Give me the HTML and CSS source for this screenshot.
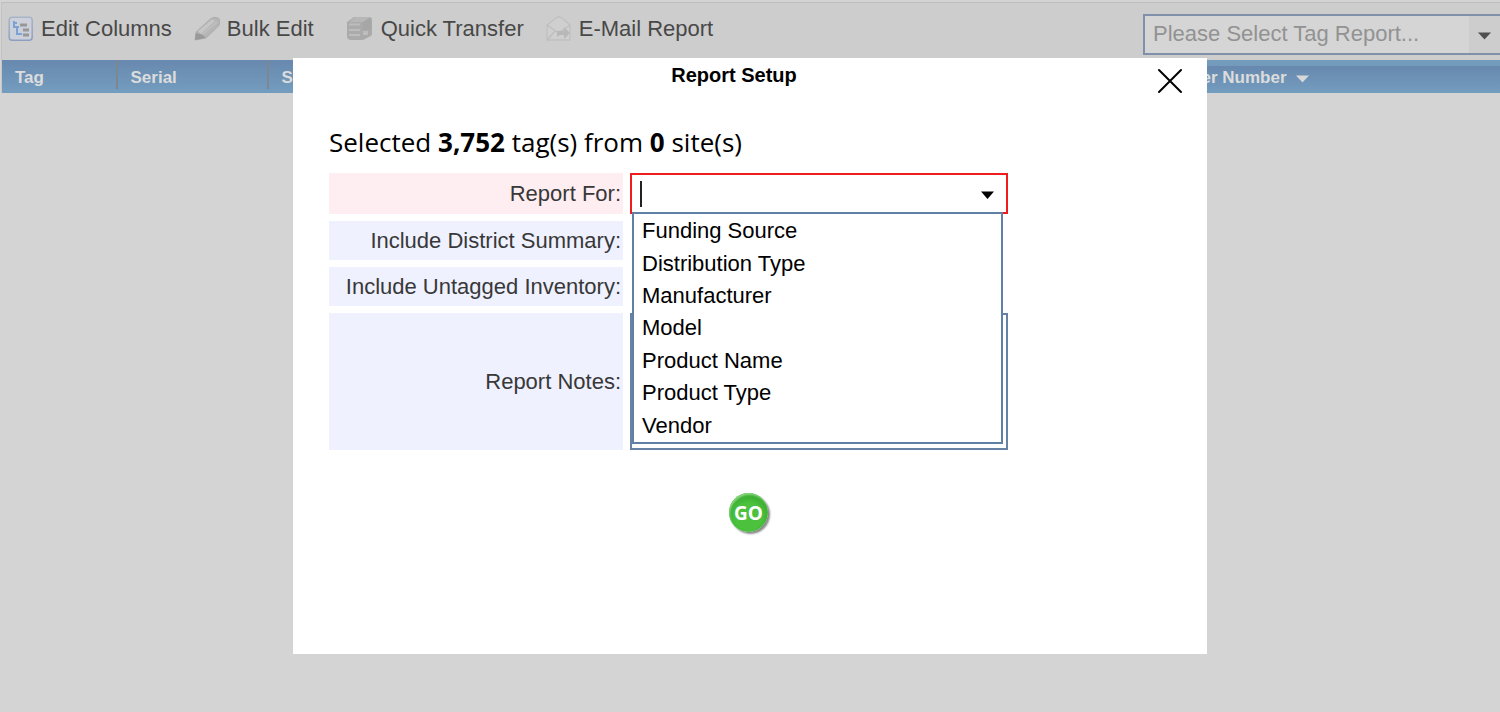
FILE: index.html
```html
<!DOCTYPE html>
<html lang="en">
<head>
<meta charset="utf-8">
<title>Report Setup</title>
<link rel="stylesheet" href="styles.css">
</head>
<body>
<main class="page">
  <div class="toolbar">
    <nav class="tools">
      <button class="tool tool-columns" type="button">
        <svg class="icon" viewBox="0 0 26 26" aria-hidden="true">
          <defs><linearGradient id="tile" x1="0" y1="0" x2="0" y2="1"><stop offset="0" stop-color="#a9b4c8"/><stop offset="1" stop-color="#8f9dc0"/></linearGradient></defs>
          <rect x="1.2" y="1.2" width="23" height="23" rx="3" fill="#cbd0da" stroke="url(#tile)" stroke-width="1.5"/>
          <path d="M5 7h4M6 5v6h5M9 11v7h5" fill="none" stroke="#7ba2d2" stroke-width="2"/>
          <path d="M12 9h7M15 14h6M15 19h6" stroke="#979797" stroke-width="3"/>
        </svg>Edit Columns</button>
      <button class="tool tool-bulk" type="button">
        <svg class="icon" viewBox="0 0 26 26" aria-hidden="true">
          <path d="M1 24l1-8L17 2.500q4-2.500 8 0 2 3 0 7L12 22z" fill="#b5b5b5" stroke="#adadad"/>
          <path d="M4 15L18 3.500l3 1.500L7 18z" fill="#c6c6c6"/>
          <path d="M9 18L23 6" stroke="#bebebe" stroke-width="2"/>
          <path d="M1 24l1-7 4 1 4 2 1 2z" fill="#999"/>
        </svg>Bulk Edit</button>
      <button class="tool tool-transfer" type="button">
        <svg class="icon" viewBox="0 0 26 26" aria-hidden="true">
          <path d="M8 1h15q3 0 3 3v14q0 2-3 3l-6 3H5q-4 0-4-4V6z" fill="#aaa"/>
          <path d="M9 1h15l-7 5H3z" fill="#b7b7b7"/>
          <rect x="1.500" y="6" width="14" height="16" rx="2" fill="#ababab"/>
          <path d="M3 8.500h11M3 14h11M3 19h11" stroke="#bdbdbd" stroke-width="2"/>
          <path d="M17 6l8-4v11l-8 1z" fill="#a6a6a6"/>
          <path d="M17 15h5v4h-5z" fill="#bdbdbd"/>
        </svg>Quick Transfer</button>
      <button class="tool tool-mail" type="button">
        <svg class="icon" viewBox="0 0 26 26" aria-hidden="true">
          <path d="M1 9L10 2q3-2 6 0l8 7v15H1z" fill="#cfcfcf" stroke="#c0c0c0" stroke-width="1.300"/>
          <path d="M1 24l8-9M1 9l11.500 8L24 9" fill="none" stroke="#bebebe" stroke-width="1.300"/>
          <path d="M11 15h7v-4l6 6-6 6v-4h-4l-3 2z" fill="#b8b8b8"/>
        </svg>E-Mail Report</button>
    </nav>
    <div class="tag-report">
      <select class="tag-select" aria-label="Tag report">
        <option>Please Select Tag Report...</option>
      </select>
      <span class="tag-arrow" aria-hidden="true"><svg width="13" height="8" viewBox="0 0 13 8"><path d="M0 .5h13L6.500 7.500z" fill="#4f4f4f"/></svg></span>
    </div>
  </div>
  <table class="grid">
    <thead>
      <tr>
        <th class="col-tag">Tag</th>
        <th class="col-serial">Serial</th>
        <th class="col-site">S</th>
        <th class="col-number">er Number <svg class="sort" width="13" height="8" viewBox="0 0 13 8" aria-hidden="true"><path d="M0 .5h13L6.500 7.500z" fill="#d8d8d8"/></svg></th>
      </tr>
    </thead>
  </table>
</main>

<div class="overlay">
  <section class="dialog" role="dialog" aria-labelledby="dialog-title">
    <header class="dialog-head">
      <h1 class="dialog-title" id="dialog-title">Report Setup</h1>
      <button class="close" type="button" aria-label="Close">
        <svg width="26" height="26" viewBox="0 0 26 26" aria-hidden="true"><path d="M2 2l22 22M24 2L2 24" stroke="#000" stroke-width="2" stroke-linecap="round"/></svg>
      </button>
    </header>
    <form class="form">
      <p class="summary">Selected <b>3,752</b> tag(s) from <b>0</b> site(s)</p>
      <div class="fields">
        <label class="label required" for="report-for">Report For:</label>
        <div class="combo">
          <div class="combo-box">
            <span class="caret" aria-hidden="true"></span>
            <input class="combo-input" id="report-for" type="text" role="combobox" aria-expanded="true" aria-controls="report-options">
            <button class="combo-toggle" type="button" aria-label="Show options">
              <svg width="13" height="8" viewBox="0 0 13 8" aria-hidden="true"><path d="M0 .5h13L6.500 8z" fill="#000"/></svg>
            </button>
          </div>
          <ul class="options" id="report-options" role="listbox">
            <li class="option" role="option">Funding Source</li>
            <li class="option" role="option">Distribution Type</li>
            <li class="option" role="option">Manufacturer</li>
            <li class="option" role="option">Model</li>
            <li class="option" role="option">Product Name</li>
            <li class="option" role="option">Product Type</li>
            <li class="option" role="option">Vendor</li>
          </ul>
        </div>
        <label class="label" for="district">Include District Summary:</label>
        <div class="check"><input id="district" type="checkbox"></div>
        <label class="label" for="untagged">Include Untagged Inventory:</label>
        <div class="check"><input id="untagged" type="checkbox"></div>
        <label class="label" for="notes">Report Notes:</label>
        <textarea class="notes" id="notes"></textarea>
      </div>
    </form>
    <button class="go" type="button" aria-label="Go">GO</button>
  </section>
</div>
</body>
</html>
```

FILE: styles.css
```css
* {
  box-sizing: border-box;
}

body {
  margin: 0;
  min-height: 100vh;
  background: #d4d4d4;
  font-family: "Liberation Sans", Arial, sans-serif;
  font-size: 22px;
  overflow: hidden;
}

button,
input,
select,
textarea {
  font: inherit;
}

.page {
  padding: 2px 0 0 1px;
}

.toolbar {
  display: flex;
  justify-content: space-between;
  align-items: flex-start;
  height: 58px;
  border-top: 1px solid #bdbdbd;
  border-left: 1px solid #c2c2c2;
  background: #cdcdcd;
}

.tools {
  display: flex;
  padding: 10px 0 0 6px;
}

.tool {
  display: flex;
  align-items: center;
  gap: 7px;
  padding: 0;
  border: 0;
  background: none;
  color: #484848;
  line-height: 32px;
  white-space: nowrap;
}

.icon {
  width: 26px;
  height: 26px;
  flex: none;
}

.tool-bulk {
  margin-left: 22px;
}

.tool-transfer {
  gap: 9px;
  margin-left: 32px;
}

.tool-mail {
  margin-left: 22px;
}

.tag-report {
  display: flex;
  width: 357px;
  height: 41px;
  margin-top: 11px;
  border: 2px solid #8090aa;
  border-right: 0;
  background: #d5d5d5;
}

.tag-select {
  flex: 1;
  min-width: 0;
  padding: 0 0 2px 8px;
  border: 0;
  appearance: none;
  background: transparent;
  color: #929292;
}

.tag-arrow {
  display: flex;
  align-items: center;
  justify-content: center;
  width: 31px;
  padding-top: 3px;
  background: #cdcdcd;
}

.grid {
  width: 100%;
  border-collapse: collapse;
  table-layout: fixed;
  border-left: 1px solid #c8c8c8;
  background: linear-gradient(#6888ae, #739dbf);
  color: #dcdcdc;
  font-size: 17px;
}

.grid th {
  height: 33px;
  padding: 3px 0 0 13px;
  text-align: left;
  vertical-align: middle;
}

.col-tag {
  width: 116px;
}

.col-serial {
  width: 151px;
}

.grid .col-site {
  width: 933px;
}

.grid .col-tag,
.grid .col-serial {
  background: linear-gradient(#7d8794, #7d8794) right top / 2px 29px no-repeat;
}

.grid .col-number {
  padding-left: 0;
  background: linear-gradient(#739bbb 0 6px, #6888ae 6px, #739dbf);
}

.sort {
  margin-left: 5px;
}

.overlay {
  position: fixed;
  inset: 0;
  display: grid;
  place-items: center;
}

.dialog {
  display: flex;
  flex-direction: column;
  width: 914px;
  max-width: 100%;
  padding-bottom: 122px;
  background: #fff;
}

.dialog-head {
  display: grid;
  grid-template-columns: 50px 1fr 50px;
  height: 64px;
}

.dialog-title {
  grid-column: 2;
  margin: 5px 0 0;
  padding-right: 32px;
  font-size: 20px;
  line-height: 24px;
  text-align: center;
}

.close {
  width: 26px;
  height: 26px;
  margin-top: 10px;
  padding: 0;
  border: 0;
  background: none;
}

.form {
  padding: 0 36px;
}

.summary {
  margin: 0;
  font-family: "Open Sans", sans-serif;
  font-size: 26px;
  line-height: 40px;
}

.fields {
  display: grid;
  grid-template-columns: 294px 378px;
  grid-template-rows: auto auto auto 137px;
  gap: 7px;
  padding-top: 11px;
}

.label {
  display: flex;
  align-items: center;
  justify-content: flex-end;
  min-height: 39px;
  padding-right: 2px;
  background: #eff1ff;
  color: #383838;
}

.required {
  min-height: 41px;
  background: #ffeef1;
}

.combo {
  position: relative;
}

.combo-box {
  display: flex;
  align-items: center;
  height: 41px;
  padding: 0 12px 0 8px;
  border: 2px solid #ee1c1c;
  background: #fff;
}

.caret {
  width: 2px;
  height: 26px;
  background: #222;
}

.combo-input {
  flex: 1;
  min-width: 0;
  border: 0;
  outline: 0;
}

.combo-toggle {
  display: flex;
  padding: 2px 0 0;
  border: 0;
  background: none;
}

.options {
  position: absolute;
  z-index: 1;
  top: 39px;
  left: 2px;
  right: 5px;
  display: grid;
  grid-auto-rows: 1fr;
  height: 232px;
  margin: 0;
  padding: 1px 0 0 8px;
  border: 2px solid #6080a5;
  background: #fff;
  list-style: none;
}

.option {
  display: flex;
  align-items: center;
}

.check {
  display: flex;
  align-items: center;
  padding-left: 6px;
}

.notes {
  width: 100%;
  border: 2px solid #6683a5;
  background: #fff;
  resize: none;
}

.go {
  align-self: center;
  width: 39px;
  height: 39px;
  margin: 43px 3px 0 0;
  padding: 0;
  border: 0;
  border-radius: 50%;
  background: radial-gradient(circle at 50% 60%, #4bc13e 0 45%, #2b9d24 85%);
  box-shadow: 2px 2px 2px #888, inset 1px 2px 2px #8bd780;
  color: #fff;
  font-family: "Open Sans", sans-serif;
  font-size: 19px;
  font-weight: 700;
}
```
